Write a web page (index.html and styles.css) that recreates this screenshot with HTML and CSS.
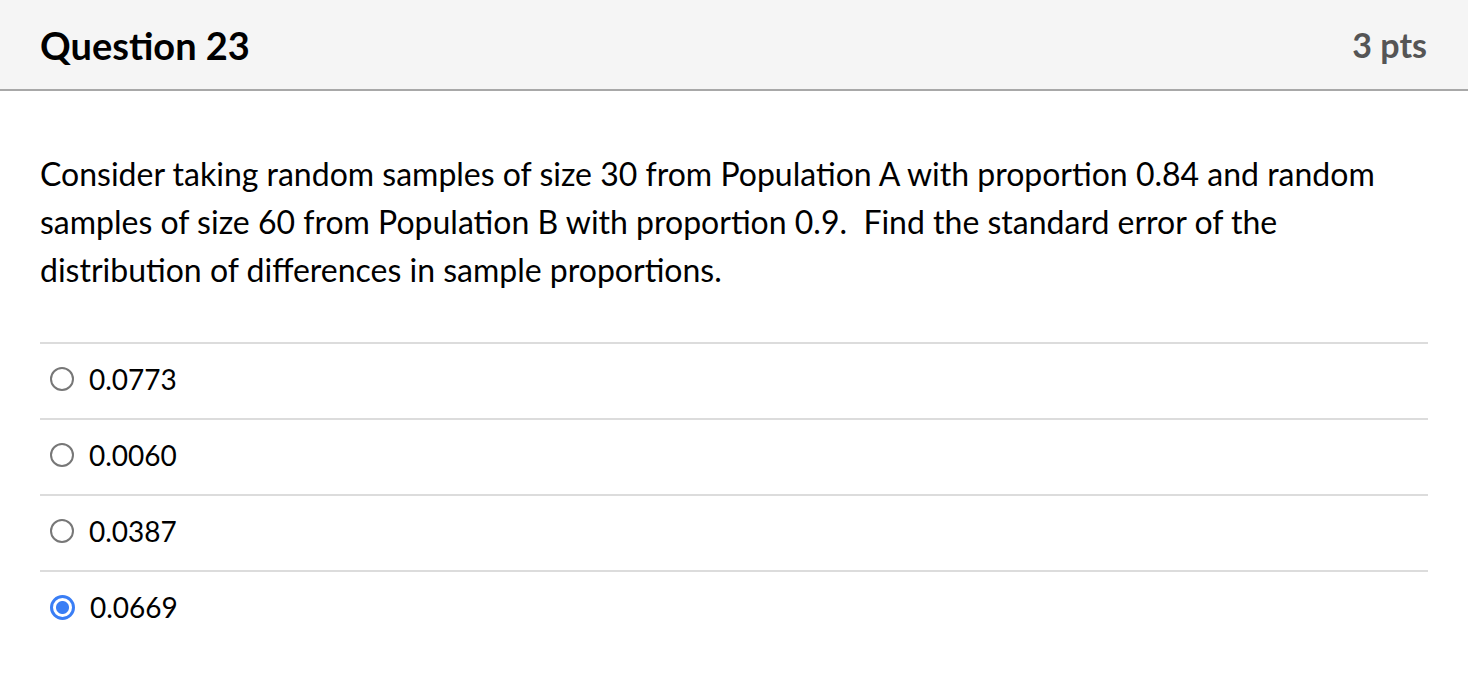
FILE: index.html
```html
<!DOCTYPE html>
<html lang="en">
<head>
<meta charset="utf-8">
<title>Question 23</title>
<link rel="stylesheet" href="styles.css">
</head>
<body>
<div class="question">
  <div class="q-header">
    <h2 class="q-title">Question 23</h2>
    <span class="q-points">3 pts</span>
  </div>
  <div class="q-body">
    <p class="q-text">Consider taking random samples of size 30 from Population A with proportion 0.84 and random samples of size 60 from Population B with proportion 0.9.&nbsp; Find the standard error of the distribution of differences in sample proportions.</p>
    <div class="answers">
      <label class="answer"><span class="radio"></span><span class="answer-text">0.0773</span></label>
      <label class="answer"><span class="radio"></span><span class="answer-text">0.0060</span></label>
      <label class="answer"><span class="radio"></span><span class="answer-text">0.0387</span></label>
      <label class="answer"><span class="radio checked"></span><span class="answer-text">0.0669</span></label>
    </div>
  </div>
</div>
</body>
</html>
```
FILE: styles.css
```css
html, body {
  margin: 0;
  padding: 0;
  background: #ffffff;
}
body {
  font-family: Lato, "Noto Sans", sans-serif;
  color: #000;
}
.q-header {
  display: flex;
  justify-content: space-between;
  align-items: center;
  padding: 0 41px 0 40px;
  background: #f5f5f5;
  border-bottom: 2px solid #a8a8a8;
  box-sizing: border-box;
  height: 91px;
}
.q-title {
  margin: 0;
  font-size: 38px;
  font-weight: 700;
  color: #000;
}
.q-points {
  font-size: 34px;
  font-weight: 700;
  color: #555;
}
.q-body {
  padding: 0 40px 0 40px;
}
.q-text {
  margin: 59px 0 0 0;
  font-size: 32px;
  line-height: 48px;
}
.answers {
  margin-top: 48px;
}
.answer {
  display: flex;
  align-items: center;
  box-sizing: border-box;
  height: 76px;
  border-top: 2px solid #dcdcdc;
  padding-bottom: 4px;
}
.radio {
  width: 20px;
  height: 20px;
  border: 2px solid #777;
  border-radius: 50%;
  margin: 0 15px 0 10px;
  box-sizing: content-box;
  flex: none;
}
.radio.checked {
  border: 3px solid #3a7ef5;
  width: 19px;
  height: 19px;
  background: radial-gradient(circle, #3a7ef5 0 6px, #fff 7px);
}
.answer-text {
  font-size: 28px;
}
```
